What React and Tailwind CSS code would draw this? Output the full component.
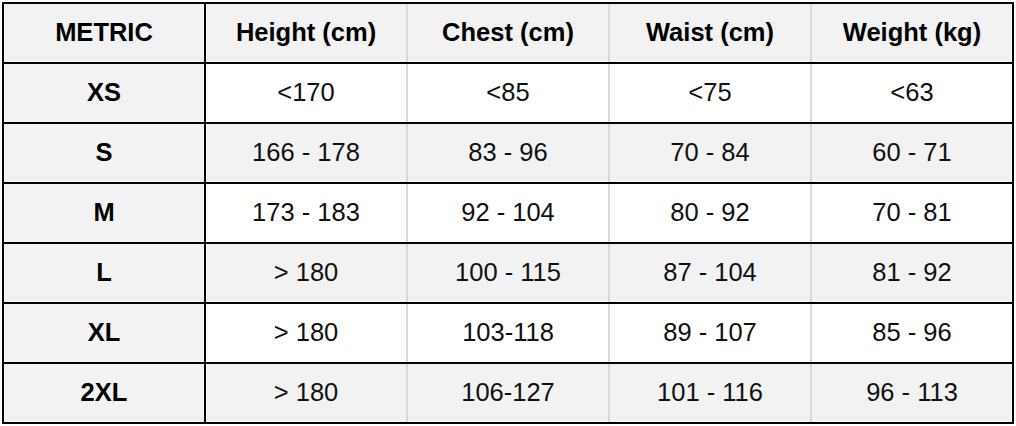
// App.jsx
import React from "react";

const HEADERS = ["METRIC", "Height (cm)", "Chest (cm)", "Waist (cm)", "Weight (kg)"];

const ROWS = [
  ["XS", "<170", "<85", "<75", "<63"],
  ["S", "166 - 178", "83 - 96", "70 - 84", "60 - 71"],
  ["M", "173 - 183", "92 - 104", "80 - 92", "70 - 81"],
  ["L", "> 180", "100 - 115", "87 - 104", "81 - 92"],
  ["XL", "> 180", "103-118", "89 - 107", "85 - 96"],
  ["2XL", "> 180", "106-127", "101 - 116", "96 - 113"],
];

function Cell({ idx, bold, shaded, children }) {
  const sep =
    idx === 0
      ? "border-r-2 border-black"
      : idx < 4
      ? "border-r-2 border-[#d9d9d9]"
      : "";
  return (
    <div
      className={`flex h-[58px] items-center justify-center ${sep} ${
        shaded || idx === 0 ? "bg-[#f2f2f2]" : "bg-white"
      } ${bold || idx === 0 ? "font-bold text-black" : "text-[#111]"}`}
    >
      {children}
    </div>
  );
}

export default function App() {
  return (
    <div
      className="min-h-[426px] w-[1016px] bg-white pl-[2px] pt-[2px]"
      style={{ fontFamily: '"Liberation Sans", Arial, sans-serif' }}
    >
      <div className="w-[1012px] border-2 border-black text-[25.5px] leading-none">
        {/* Header */}
        <div className="grid grid-cols-[202px_202px_202px_202px_200px] border-b-2 border-black">
          {HEADERS.map((h, i) => (
            <Cell key={h} idx={i} bold shaded>
              {h}
            </Cell>
          ))}
        </div>

        {/* Sizes */}
        {ROWS.map((row, r) => (
          <div
            key={row[0]}
            className={`grid grid-cols-[202px_202px_202px_202px_200px] ${
              r < ROWS.length - 1 ? "border-b-2 border-black" : ""
            }`}
          >
            {row.map((v, i) => (
              <Cell key={i} idx={i} shaded={r % 2 === 1}>
                {v}
              </Cell>
            ))}
          </div>
        ))}
      </div>
    </div>
  );
}
